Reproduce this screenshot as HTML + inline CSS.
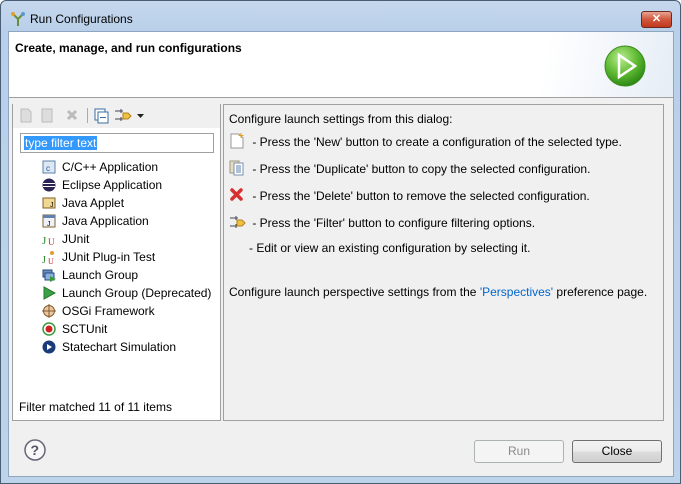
<!DOCTYPE html>
<html><head><style>
*{margin:0;padding:0;box-sizing:border-box}
body{width:681px;height:484px;overflow:hidden;font-family:"Liberation Sans",sans-serif;font-size:12px;color:#000;background:#fff}
.win{position:absolute;left:0;top:0;width:681px;height:484px;background:linear-gradient(#c5d7ec,#b9d0ea 30px,#bcd3ea);border:1px solid #4a5d74;border-radius:6px 6px 0 0}
.title{position:absolute;left:29px;top:11px;font-size:12px;color:#000}
.xbtn{position:absolute;left:640px;top:10px;width:31px;height:17px;border:1px solid #6b2a20;border-radius:3px;background:linear-gradient(#e8a493,#d0573d 50%,#c0391e);color:#fff;font-weight:bold;text-align:center;font-size:11px;line-height:15px}
.client{position:absolute;left:7px;top:30px;width:666px;height:446px;background:#f0f0f0;border:1px solid #8fa6c0}
.hdr{position:absolute;left:0;top:0;width:664px;height:66px;background:linear-gradient(100deg,#fff 80%,#e6edf6);border-bottom:1px solid #a0a0a0}
.hdr b{position:absolute;left:6px;top:9px;font-size:12px}
.panel{position:absolute;border:1px solid #a0a0a0}
.lp{left:3px;top:72px;width:209px;height:317px;background:#fff}
.rp{left:214px;top:72px;width:441px;height:317px;background:#f0f0f0}
.tb{position:absolute;left:0;top:-2px;width:207px;height:25px;background:#f0f0f0}
.filter{position:absolute;left:7px;top:28px;width:194px;height:20px;border:1px solid #a0a0a0;background:#fff;padding:2px 3px}
.filter span{background:#3399ff;color:#fff;padding:0 1px}
.item{position:absolute;left:29px;height:18px;line-height:18px;white-space:nowrap}
.ic{display:inline-block;width:14px;height:14px;vertical-align:-3px;margin-right:6px}
.rt{position:absolute;left:5px;white-space:nowrap}
.btn{position:absolute;top:408px;width:90px;height:23px;border:1px solid #707070;border-radius:3px;background:linear-gradient(#f2f2f2,#ebebeb 50%,#dddddd 51%,#cfcfcf);text-align:center;line-height:21px}
a{color:#0066cc}
</style></head><body>
<div class="win">
<svg style="position:absolute;left:9px;top:10px" width="16" height="16"><path d="M3 3l5 5M13 3l-5 5M8 8v7" stroke="#6a8e3a" stroke-width="2" fill="none"/><circle cx="3" cy="3" r="2" fill="#e0a030"/><circle cx="13" cy="3" r="2" fill="#5a9ad0"/></svg>
<div class="title">Run Configurations</div>
<div class="xbtn">✕</div>
<div class="client">
<div class="hdr"><b>Create, manage, and run configurations</b>
<svg style="position:absolute;left:594px;top:12px" width="44" height="46"><defs><radialGradient id="g" cx="40%" cy="30%" r="70%"><stop offset="0" stop-color="#b8ec8c"/><stop offset="0.6" stop-color="#5cb830"/><stop offset="1" stop-color="#2f8a16"/></radialGradient></defs><circle cx="22" cy="22" r="20" fill="url(#g)" stroke="#3b8a1e"/><path d="M16 11L32 22L16 33Z" fill="none" stroke="#fff" stroke-width="2.5"/></svg>
</div>
<div class="panel lp">
<div class="tb">
<svg width="208" height="25"><g fill="#ddd" stroke="#bbb"><path d="M8 6h7l3 3v10h-10z"/><rect x="29" y="6" width="10" height="13"/></g><path d="M55 8l8 8M63 8l-8 8" stroke="#bbb" stroke-width="3"/><line x1="74.5" y1="5" x2="74.5" y2="20" stroke="#aaa"/><rect x="82" y="6" width="10" height="11" fill="#fff" stroke="#3a6ea5"/><rect x="85" y="9" width="10" height="11" fill="#fff" stroke="#3a6ea5"/><line x1="87" y1="14.5" x2="93" y2="14.5" stroke="#3a6ea5"/><path d="M102 8h8M102 16h8M108 6v4M108 14v4" stroke="#445"/><path d="M110 10h5l3 3-3 3h-5z" fill="#f0c040" stroke="#b08020"/><path d="M124 11h7l-3.5 4z" fill="#222"/></svg>
</div>
<div class="filter"><span>type filter text</span></div>
<div class="item" style="top:53px"><svg class="ic"><rect x="1" y="1" width="12" height="12" fill="#dde8f4" stroke="#5a7fa8"/><text x="4" y="11" font-size="8" fill="#2050a0">c</text></svg>C/C++ Application</div>
<div class="item" style="top:71px"><svg class="ic"><circle cx="7" cy="7" r="6.5" fill="#2c2255"/><path d="M1 5.5h12M1 8.5h12" stroke="#fff"/></svg>Eclipse Application</div>
<div class="item" style="top:89px"><svg class="ic"><rect x="1" y="2" width="12" height="10" fill="#f0d890" stroke="#806030"/><text x="8" y="11" font-size="7">J</text></svg>Java Applet</div>
<div class="item" style="top:107px"><svg class="ic"><rect x="1" y="1" width="12" height="12" fill="#eef2f8" stroke="#806030"/><rect x="1" y="1" width="12" height="3" fill="#6080b0"/><text x="5" y="12" font-size="7">J</text></svg>Java Application</div>
<div class="item" style="top:125px"><svg class="ic"><text x="0" y="12" font-size="11" fill="#2a8a2a" font-family="Liberation Serif">J</text><text x="6" y="13" font-size="9" fill="#c02020" font-family="Liberation Serif">U</text></svg>JUnit</div>
<div class="item" style="top:143px"><svg class="ic"><text x="0" y="13" font-size="10" fill="#2a8a2a" font-family="Liberation Serif">J</text><text x="6" y="14" font-size="8" fill="#c02020" font-family="Liberation Serif">U</text><circle cx="10" cy="3" r="2" fill="#e0a030"/></svg>JUnit Plug-in Test</div>
<div class="item" style="top:161px"><svg class="ic"><rect x="1" y="2" width="9" height="7" fill="#6a8fc0" stroke="#2a4a80"/><rect x="3" y="5" width="9" height="7" fill="#8ab0e0" stroke="#2a4a80"/><path d="M8 8l6 3-6 3z" fill="#3a9a3a"/></svg>Launch Group</div>
<div class="item" style="top:179px"><svg class="ic"><path d="M2 1l11 6-11 6z" fill="#3aa04a" stroke="#2a7a2a"/></svg>Launch Group (Deprecated)</div>
<div class="item" style="top:197px"><svg class="ic"><circle cx="7" cy="7" r="5.5" fill="#e8c8a0" stroke="#8a5a30"/><path d="M7 0v14M0 7h14" stroke="#8a5a30"/></svg>OSGi Framework</div>
<div class="item" style="top:215px"><svg class="ic"><circle cx="7" cy="7" r="6" fill="#fff" stroke="#3a9a3a" stroke-width="1.5"/><circle cx="7" cy="7" r="3.5" fill="#d02020"/></svg>SCTUnit</div>
<div class="item" style="top:233px"><svg class="ic"><circle cx="7" cy="7" r="6.5" fill="#1a3a7a"/><path d="M5 4l5 3-5 3z" fill="#fff"/></svg>Statechart Simulation</div>
<div style="position:absolute;left:6px;top:295px">Filter matched 11 of 11 items</div>
</div>
<div class="panel rp">
<div class="rt" style="top:7px">Configure launch settings from this dialog:</div>
<div class="rt" style="top:28px"><svg class="ic" style="width:18px;height:16px;margin-right:2px"><path d="M2 1h8l4 4v10h-12z" fill="#fff" stroke="#999"/><path d="M12 0v5M9.5 2.5h5" stroke="#e0a020"/></svg> - Press the 'New' button to create a configuration of the selected type.</div>
<div class="rt" style="top:55px"><svg class="ic" style="width:18px;height:16px;margin-right:2px"><rect x="1" y="1" width="9" height="12" fill="#e8dcc0" stroke="#998"/><rect x="5" y="3" width="9" height="12" fill="#fff" stroke="#7890b0"/><path d="M7 6h5M7 8h5M7 10h5M7 12h5" stroke="#6080b0"/></svg> - Press the 'Duplicate' button to copy the selected configuration.</div>
<div class="rt" style="top:82px"><svg class="ic" style="width:18px;height:16px;margin-right:2px"><path d="M3 3l9 9M12 3l-9 9" stroke="#d83030" stroke-width="3.5" stroke-linecap="round"/></svg> - Press the 'Delete' button to remove the selected configuration.</div>
<div class="rt" style="top:109px"><svg class="ic" style="width:18px;height:16px;margin-right:2px"><path d="M1 4h8M1 12h8M7 2v4M7 10v4" stroke="#445"/><path d="M8 6h5l3 3-3 3h-5z" fill="#f0c040" stroke="#b08020"/></svg> - Press the 'Filter' button to configure filtering options.</div>
<div class="rt" style="top:136px;left:25px">- Edit or view an existing configuration by selecting it.</div>
<div class="rt" style="top:180px">Configure launch perspective settings from the <a>'Perspectives'</a> preference page.</div>
</div>
<svg style="position:absolute;left:14px;top:406px" width="24" height="24"><circle cx="12" cy="12" r="10" fill="#f8f8f8" stroke="#667" stroke-width="1.5"/><text x="7.5" y="17" font-size="14" font-weight="bold" fill="#556" font-family="Liberation Sans">?</text></svg>
<div class="btn" style="left:465px;border-color:#adb2b5;background:#f4f4f4;color:#8a8a8a">Run</div>
<div class="btn" style="left:563px">Close</div>
</div>
</div>
</body></html>
